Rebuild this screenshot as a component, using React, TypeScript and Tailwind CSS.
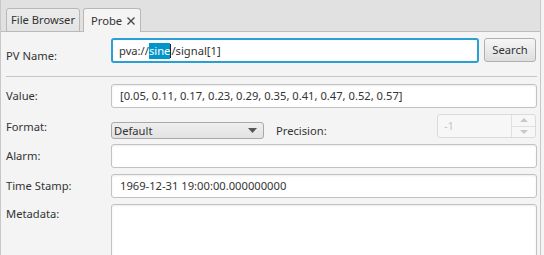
import React from "react";

const font = "font-['Noto_Sans','Open_Sans',sans-serif]";

const Field = ({ children, className = "" }: { children?: React.ReactNode; className?: string }) => (
  <div
    className={`flex items-center rounded-[3px] border border-[#c2c2c2] bg-white pl-[8px] text-[#333] shadow-[inset_0_1px_2px_rgba(0,0,0,0.08)] ${className}`}
  >
    {children}
  </div>
);

const Label = ({ children, className = "" }: { children: React.ReactNode; className?: string }) => (
  <div className={`w-[105px] shrink-0 text-[#333] ${className}`}>{children}</div>
);

export default function App() {
  return (
    <div className={`h-[255px] w-[544px] overflow-hidden bg-[#f4f4f4] text-[11.2px] leading-[16px] ${font}`}>
      <div className="flex h-full w-[541px] flex-col border-x border-[#c8c8c8]">
        {/* tab header */}
        <div className="flex h-[32px] shrink-0 items-end gap-[3px] border-b border-[#bdbdbd] bg-[#e1e1e1] pl-[5px]">
          <div className="-mb-px flex h-[24px] w-[74px] items-center justify-center rounded-t-[3px] border border-[#b8b8b8] bg-gradient-to-b from-[#ececec] to-[#e4e4e4] text-[#333]">
            File Browser
          </div>
          <div className="-mb-px flex h-[24px] w-[58px] items-center gap-[4px] rounded-t-[3px] border border-b-0 border-[#b8b8b8] bg-[#f4f4f4] pl-[7px] text-[#333]">
            <span>Probe</span>
            <svg width="10" height="10" viewBox="0 0 10 10" className="mt-[1px]">
              <path d="M1.5 1.5 L8.5 8.5 M8.5 1.5 L1.5 8.5" stroke="#444" strokeWidth="1.3" />
            </svg>
          </div>
        </div>

        {/* content */}
        <div className="flex flex-col pl-[5px] pr-[3px]">
          <div className="mt-[6px] flex h-[25px] items-start">
            <Label className="pt-[10px]">PV Name:</Label>
            <div className="flex h-[25px] w-[368px] items-center rounded-[3px] border-[2px] border-[#2a9fd6] bg-white pl-[6px] text-[#333]">
              <span>pva://</span>
              <span className="bg-[#0096c9] text-white">sine</span>
              <span className="h-[14px] w-px bg-[#222]" />
              <span>/signal[1]</span>
            </div>
            <div className="ml-[5px] flex h-[24px] w-[52px] items-center justify-center rounded-[3px] border border-[#b0b0b0] bg-gradient-to-b from-[#f6f6f6] to-[#dedede] text-[#333]">
              Search
            </div>
          </div>

          <div className="mt-[13px] h-px w-[531px] bg-[#c6c6c6]" />

          <div className="mt-[7px] flex h-[24px] items-center">
            <Label>Value:</Label>
            <Field className="h-[24px] flex-1">[0.05, 0.11, 0.17, 0.23, 0.29, 0.35, 0.41, 0.47, 0.52, 0.57]</Field>
          </div>

          <div className="mt-[6px] flex h-[24px] items-start">
            <Label className="pt-[5px]">Format:</Label>
            <div className="mt-[8px] flex h-[17px] w-[153px] items-center justify-between rounded-[3px] border border-[#a9a9a9] bg-gradient-to-b from-[#efefef] to-[#e2e2e2] pl-[2px] pr-[6px] text-[#333]">
              <span>Default</span>
              <svg width="9" height="5" viewBox="0 0 9 5">
                <path d="M0 0 H9 L4.5 5 Z" fill="#555" />
              </svg>
            </div>
            <div className="ml-[12px] mt-[9px] w-[161px] text-[#333]">Precision:</div>
            <div className="flex h-[24px] w-[99px] rounded-[3px] border border-[#dadada] bg-[#f7f7f7]">
              <div className="flex flex-1 items-center pl-[6px] text-[#c4c4c4]">-1</div>
              <div className="flex w-[24px] flex-col border-l border-[#e0e0e0]">
                <div className="flex flex-1 items-center justify-center border-b border-[#e0e0e0]">
                  <svg width="8" height="4" viewBox="0 0 8 4">
                    <path d="M0 4 H8 L4 0 Z" fill="#c8c8c8" />
                  </svg>
                </div>
                <div className="flex flex-1 items-center justify-center">
                  <svg width="8" height="4" viewBox="0 0 8 4">
                    <path d="M0 0 H8 L4 4 Z" fill="#c8c8c8" />
                  </svg>
                </div>
              </div>
            </div>
          </div>

          <div className="mt-[6px] flex h-[24px] items-center">
            <Label>Alarm:</Label>
            <Field className="h-[24px] flex-1" />
          </div>

          <div className="mt-[6px] flex h-[24px] items-center">
            <Label>Time Stamp:</Label>
            <Field className="h-[24px] flex-1">1969-12-31 19:00:00.000000000</Field>
          </div>

          <div className="mt-[6px] flex h-[80px] items-start">
            <Label className="pt-[2px]">Metadata:</Label>
            <div className="h-[80px] flex-1 rounded-t-[3px] border border-[#c2c2c2] bg-white shadow-[inset_0_1px_2px_rgba(0,0,0,0.08)]" />
          </div>
        </div>
      </div>
    </div>
  );
}
